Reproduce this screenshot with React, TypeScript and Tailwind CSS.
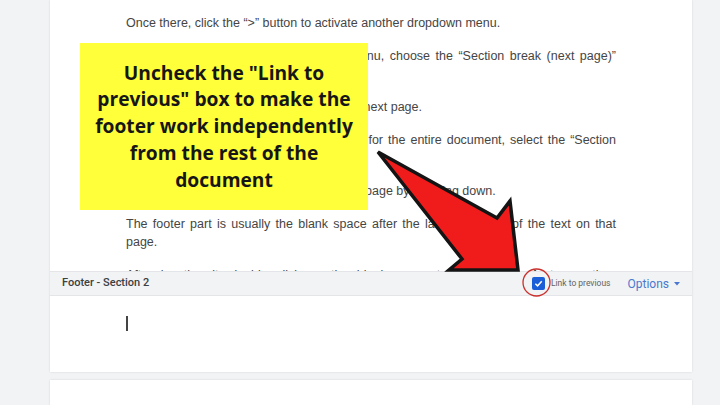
import React from 'react';

const bodyLines = [
  { text: 'Once there, click the “>” button to activate another dropdown menu.', last: true, gap: false },
  { text: 'From within this second dropdown submenu, choose the “Section break (next page)”', last: false, gap: true },
  { text: 'option.', last: true, gap: false },
  { text: 'This will automatically take you over to the next page.', last: true, gap: true },
  { text: 'If you don’t want to use the same footers for the entire document, select the “Section', last: false, gap: true },
  { text: 'break” option instead.', last: true, gap: false },
  { text: 'Next, head to the footer section of the next page by scrolling down.', last: true, gap: true },
  { text: 'The footer part is usually the blank space after the last paragraph of the text on that', last: false, gap: true },
  { text: 'page.', last: true, gap: false },
  { text: 'After locating it, double click on the blank space to activate the footer section.', last: false, gap: true },
];

export default function App() {
  return (
    <div className="relative w-[720px] h-[405px] overflow-hidden bg-[#f1f3f4] font-['Liberation_Sans',Arial,sans-serif]">
      <div className="ml-[50px] w-[642px] h-full flex flex-col gap-2">
        {/* page 1 */}
        <div className="bg-white shadow-[0_0_2px_rgba(0,0,0,0.12)] flex flex-col">
          <div className="h-[271px] overflow-hidden px-[76px] pt-[14px] text-[12.5px] leading-[18px] text-[#454545]">
            {bodyLines.map((l, i) => (
              <p
                key={i}
                className={`text-justify ${l.last ? '' : '[text-align-last:justify]'} ${l.gap && i > 0 ? 'mt-[15px]' : ''}`}
              >
                {l.text}
              </p>
            ))}
          </div>

          <div className="h-[25px] flex items-center px-3 bg-[#f1f3f4] border-y border-[#e3e5e8] font-['Roboto',sans-serif]">
            <span className="text-[11px] font-medium text-[#3c4043]">Footer - Section 2</span>
            <div className="ml-auto flex items-center">
              <span className="w-[13px] h-[13px] rounded-[2px] bg-[#1a5fd8] flex items-center justify-center">
                <svg width="9" height="9" viewBox="0 0 10 10">
                  <path d="M1.5 5.2 L4 7.6 L8.6 2.4" fill="none" stroke="white" strokeWidth="1.6" />
                </svg>
              </span>
              <span className="ml-[6px] text-[8.5px] text-[#5f6368]">Link to previous</span>
              <span className="ml-[17px] text-[12px] text-[#4a78d0] flex items-center gap-[5px]">
                Options
                <svg width="6" height="4" viewBox="0 0 6 4">
                  <path d="M0 0 L6 0 L3 3.5 Z" fill="#4a78d0" />
                </svg>
              </span>
            </div>
          </div>

          <div className="h-[76px] pl-[76px] pt-[20px]">
            <div className="w-[1.5px] h-[15px] bg-[#444]" />
          </div>
        </div>

        {/* page 2 */}
        <div className="flex-1 bg-white shadow-[0_0_2px_rgba(0,0,0,0.12)]" />
      </div>

      {/* callout */}
      <div className="absolute left-[80px] top-[43px] w-[288px] h-[167px] bg-[#ffff3a] flex items-center justify-center px-3">
        <p className="text-center font-['Open_Sans',sans-serif] font-bold text-[19.2px] leading-[26.7px] text-[#161616]">
          Uncheck the "Link to previous" box to make the footer work independently from the rest of the document
        </p>
      </div>

      {/* arrow + circle */}
      <svg className="absolute inset-0 pointer-events-none" width="720" height="405" viewBox="0 0 720 405">
        <polygon
          points="378,152 497,218 510,201 518,270 449,270 462,259"
          fill="#f01c1c"
          stroke="#141414"
          strokeWidth="3.5"
          strokeLinejoin="miter"
        />
        <circle cx="536.5" cy="282.5" r="13.5" fill="none" stroke="#c9302c" strokeWidth="1.3" />
      </svg>
    </div>
  );
}
